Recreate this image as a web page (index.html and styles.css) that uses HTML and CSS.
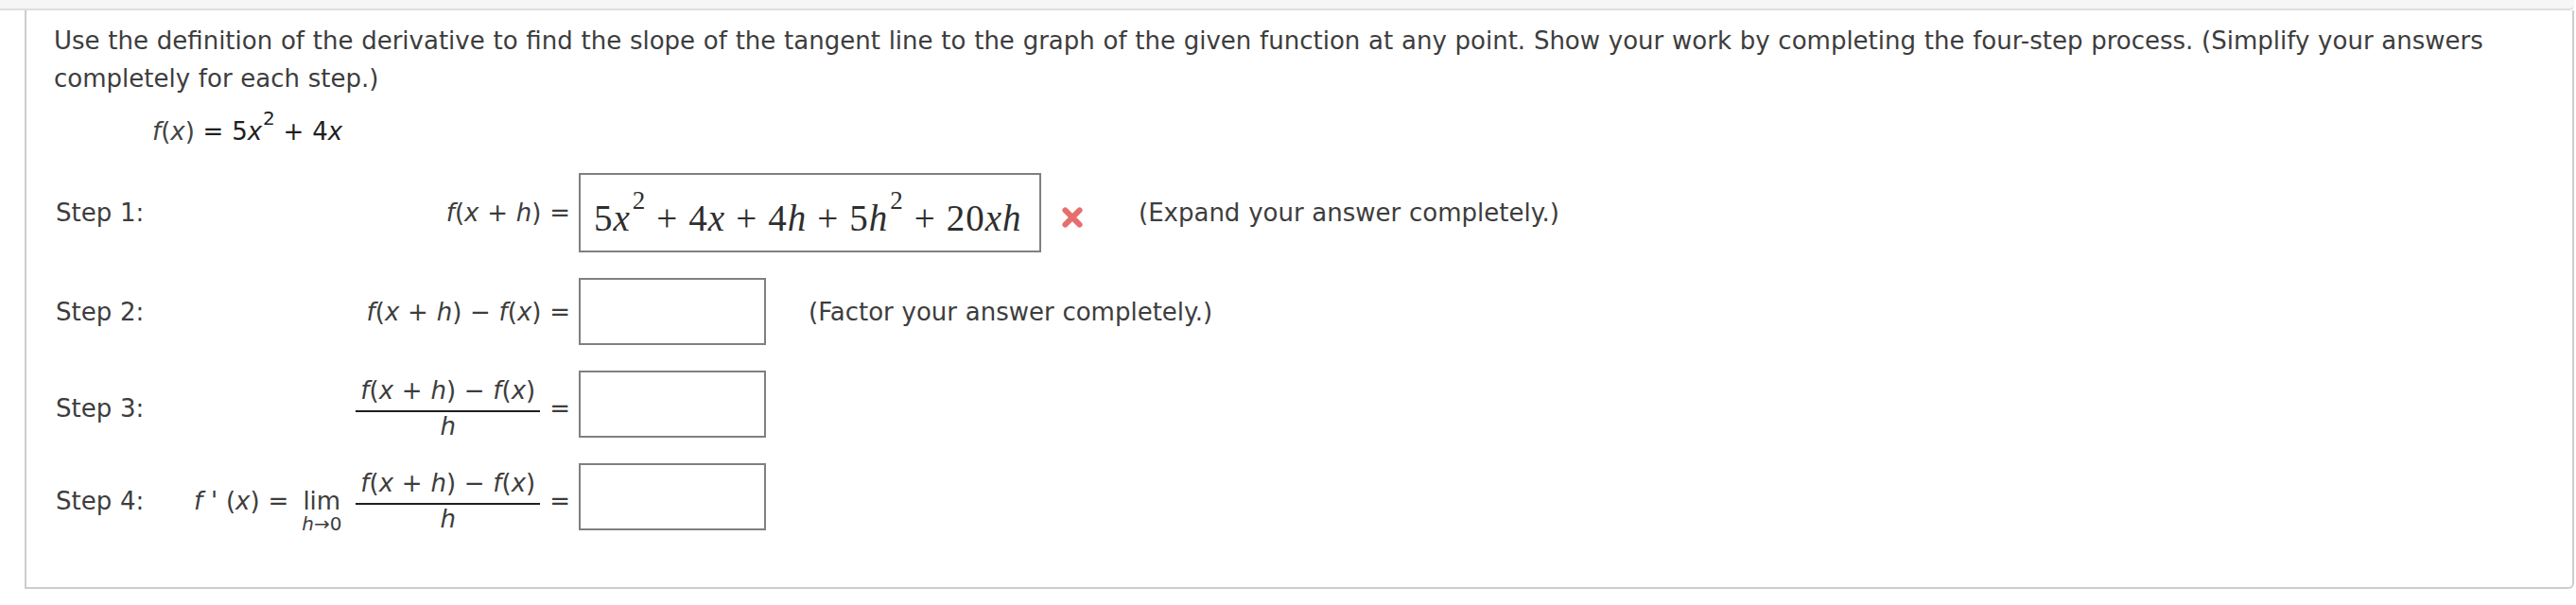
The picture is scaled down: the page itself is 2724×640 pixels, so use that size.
FILE: index.html
```html
<!DOCTYPE html>
<html lang="en">
<head>
<meta charset="utf-8">
<title>Four-step derivative</title>
<link rel="stylesheet" href="styles.css">
</head>
<body>
<div class="prev"></div>
<div class="card">
  <p class="prompt">Use the definition of the derivative to find the slope of the tangent line to the graph of the given function at any point. Show your work by completing the four-step process. (Simplify your answers completely for each step.)</p>
  <div class="given"><span class="fn"><i>f</i>(<i>x</i>)</span> = 5<i>x</i><sup class="sq">2</sup> + 4<i>x</i></div>
  <div class="steps">
    <div class="row">
      <div class="label">Step 1:</div>
      <div class="expr"><span><i>f</i>(<i>x</i> + <i>h</i>) =</span></div>
      <div class="box filled">
        <span class="math"><span class="mn">5</span><span class="mi">x</span><span class="msup">2</span><span class="mo">+</span><span class="mn">4</span><span class="mi">x</span><span class="mo">+</span><span class="mn">4</span><span class="mi">h</span><span class="mo">+</span><span class="mn">5</span><span class="mi">h</span><span class="msup">2</span><span class="mo">+</span><span class="mn">20</span><span class="mi">x</span><span class="mi">h</span></span>
      </div>
      <svg class="wrong" viewBox="0 0 24 24" aria-label="incorrect"><path d="M5 5 L19 19 M19 5 L5 19"/></svg>
      <div class="note after-icon">(Expand your answer completely.)</div>
    </div>
    <div class="row">
      <div class="label">Step 2:</div>
      <div class="expr"><span><i>f</i>(<i>x</i> + <i>h</i>) &minus; <i>f</i>(<i>x</i>) =</span></div>
      <div class="box"></div>
      <div class="note">(Factor your answer completely.)</div>
    </div>
    <div class="row">
      <div class="label shift">Step 3:</div>
      <div class="expr shift">
        <span class="frac"><span class="num"><i>f</i>(<i>x</i> + <i>h</i>) &minus; <i>f</i>(<i>x</i>)</span><span class="den"><i>h</i></span></span>
        <span class="eq">=</span>
      </div>
      <div class="box"></div>
    </div>
    <div class="row">
      <div class="label shift">Step 4:</div>
      <div class="expr shift">
        <span class="fp"><i>f</i> ' (<i>x</i>) =</span>
        <span class="lim"><span class="limw">lim</span><span class="sub"><i>h</i>&rarr;0</span></span>
        <span class="frac"><span class="num"><i>f</i>(<i>x</i> + <i>h</i>) &minus; <i>f</i>(<i>x</i>)</span><span class="den"><i>h</i></span></span>
        <span class="eq">=</span>
      </div>
      <div class="box"></div>
    </div>
  </div>
</div>
</body>
</html>
```
FILE: styles.css
```css
html, body {
  margin: 0;
  padding: 0;
  background: #ffffff;
}
body {
  font-family: "DejaVu Sans", Verdana, sans-serif;
  font-size: 26px;
  color: #3d3d3d;
  word-spacing: 0.5px;
}
.prev {
  width: 2722px;
  height: 9px;
  background: #f6f6f6;
  border-bottom: 2px solid #dedede;
  border-bottom-right-radius: 5px;
}
.card {
  margin-left: 26px;
  width: 2696px;
  height: 612px;
  box-sizing: border-box;
  border: 2px solid #cdcdcd;
  border-top: 0;
  border-bottom-right-radius: 6px;
  padding: 12px 34px 0 29px;
}
.prompt {
  margin: 0;
  line-height: 40px;
}
.given {
  margin-top: 16px;
  padding-left: 104px;
  line-height: 40px;
  color: #1e1e1e;
}
.given .fn {
  color: #444444;
}
.sq {
  font-size: 20px;
  line-height: 0;
  vertical-align: 16px;
  margin-left: 1px;
}
.steps {
  margin-top: 24px;
  display: flex;
  flex-direction: column;
  gap: 27px;
}
.row {
  display: flex;
  align-items: center;
}
.label {
  width: 133px;
  padding-left: 2px;
  box-sizing: border-box;
  line-height: 28px;
  flex: none;
}
.expr {
  width: 413px;
  margin-right: 9px;
  display: flex;
  justify-content: flex-end;
  align-items: center;
  line-height: 28px;
  white-space: nowrap;
  flex: none;
}
.shift {
  margin-top: 4px;
  margin-bottom: -4px;
}
.box {
  width: 198px;
  height: 71px;
  box-sizing: border-box;
  border: 2px solid #808080;
  background: #ffffff;
  flex: none;
}
.box.filled {
  width: 489px;
  height: 84px;
  display: flex;
  align-items: center;
  padding: 12px 14px 0 14px;
}
.math {
  font-family: "Liberation Serif", "Times New Roman", serif;
  font-size: 39px;
  line-height: 44px;
  color: #2e2e2e;
  white-space: nowrap;
  letter-spacing: 1px;
}
.mi {
  font-style: italic;
}
.msup {
  font-size: 27px;
  line-height: 0;
  vertical-align: 23px;
  margin-left: 2px;
}
.mo {
  margin: 0 11px;
}
.wrong {
  width: 26px;
  height: 26px;
  margin-left: 20px;
  margin-top: 10px;
  flex: none;
  fill: none;
  stroke: #e4605f;
  stroke-width: 5.5;
  stroke-linecap: round;
  opacity: 0.9;
}
.note {
  margin-left: 45px;
  line-height: 28px;
  white-space: nowrap;
}
.note.after-icon {
  margin-left: 57px;
}
.frac {
  display: inline-flex;
  flex-direction: column;
  align-items: center;
}
.num {
  line-height: 28px;
  padding: 0 5px 7px 5px;
  border-bottom: 2px solid #1f1f1f;
}
.den {
  line-height: 28px;
  padding-top: 1px;
}
.eq {
  margin-left: 10px;
}
.fp {
  margin-right: 14px;
}
.lim {
  display: inline-flex;
  flex-direction: column;
  align-items: center;
  margin-right: 15px;
}
.limw {
  line-height: 28px;
}
.sub {
  font-size: 20px;
  line-height: 20px;
  margin-bottom: -20px;
}
```
